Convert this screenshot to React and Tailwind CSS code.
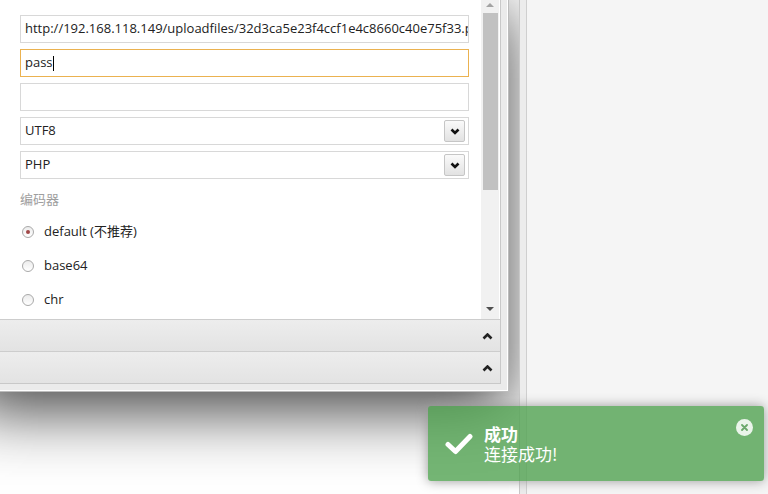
import React from 'react';

const ChevronDown = () => (
  <svg width="10" height="7" viewBox="0 0 10 7">
    <path d="M1.5 1.5 L5 5 L8.5 1.5" fill="none" stroke="#111" strokeWidth="2.6" />
  </svg>
);

const ChevronUp = () => (
  <svg width="11" height="7" viewBox="0 0 11 7">
    <path d="M1.5 5.5 L5.5 1.5 L9.5 5.5" fill="none" stroke="#222" strokeWidth="2.6" />
  </svg>
);

const Select = ({ value }) => (
  <div className="w-[449px] h-[28px] border border-[#d8d8d8] bg-white flex items-center justify-between pl-[4px] pr-[3px]">
    <span className="text-[13px] text-[#222]">{value}</span>
    <div className="w-[21px] h-[22px] rounded-[2px] border border-[#c6c6c6] bg-gradient-to-b from-[#fafafa] to-[#e2e2e2] flex items-center justify-center">
      <ChevronDown />
    </div>
  </div>
);

const Radio = ({ label, checked }) => (
  <div className="h-[34px] flex items-center">
    <div className="ml-[2px] w-[12px] h-[12px] rounded-full border border-[#a9a9a9] bg-gradient-to-b from-[#ececec] to-white flex items-center justify-center">
      {checked && <div className="w-[4px] h-[4px] rounded-full bg-[#a14848]" />}
    </div>
    <span className="ml-[10px] text-[13px] text-[#222]">{label}</span>
  </div>
);

const App = () => {
  return (
    <div className="relative w-[768px] h-[494px] overflow-hidden flex bg-white font-['Open_Sans','Noto_Sans_CJK_SC',sans-serif]">
      {/* left layout cell with the dialog */}
      <div className="relative w-[520px] h-full bg-white border-r border-[#c8c8c8] overflow-hidden">
        <div className="absolute left-[-30px] top-[-10px] w-[539px] border border-[#bcbcbc] bg-[#ebebeb] p-[7px] shadow-[inset_0_0_0_1px_#ffffff,0_20px_60px_rgba(0,0,0,0.72)]">
          <div className="border border-[#c8c8c8] bg-white flex flex-col">
            {/* form area */}
            <div className="h-[320px] flex">
              <div className="flex-1 overflow-hidden pl-[41px] pt-[16px]">
                <div className="flex flex-col gap-[6px]">
                  <div className="w-[449px] h-[28px] border border-[#d8d8d8] px-[4px] flex items-center overflow-hidden whitespace-nowrap text-[13px] text-[#222]">
                    http://192.168.118.149/uploadfiles/32d3ca5e23f4ccf1e4c8660c40e75f33.php
                  </div>
                  <div className="w-[449px] h-[28px] border border-[#ebb250] px-[4px] flex items-center text-[13px] text-[#222]">
                    pass<span className="w-px h-[15px] bg-black" />
                  </div>
                  <div className="w-[449px] h-[28px] border border-[#d8d8d8]" />
                  <Select value="UTF8" />
                  <Select value="PHP" />
                </div>
                <div className="mt-[12px] text-[13px] leading-[16px] text-[#9e9e9e]">编码器</div>
                <div className="mt-[8px] flex flex-col">
                  <Radio label="default (不推荐)" checked />
                  <Radio label="base64" />
                  <Radio label="chr" />
                </div>
              </div>
              {/* scrollbar */}
              <div className="w-[18px] mr-[1px] bg-[#f1f1f1] flex flex-col">
                <div className="h-[14px] flex items-center justify-center pb-[2px]">
                  <div className="w-0 h-0 border-x-[4px] border-x-transparent border-b-[4px] border-b-[#a3a3a3]" />
                </div>
                <div className="mx-[2px] w-[15px] h-[177px] bg-[#c1c1c1]" />
                <div className="flex-1" />
                <div className="h-[20px] flex items-center justify-center">
                  <div className="w-0 h-0 border-x-[4px] border-x-transparent border-t-[4px] border-t-[#505050]" />
                </div>
              </div>
            </div>
            {/* collapsed accordion cells */}
            <div className="h-[32px] border-t border-[#cdcdcd] bg-gradient-to-b from-[#ededed] to-[#e3e3e3] flex items-center justify-end pr-[7px] pt-[2px]">
              <ChevronUp />
            </div>
            <div className="h-[32px] border-t border-[#cdcdcd] bg-gradient-to-b from-[#ededed] to-[#e3e3e3] flex items-center justify-end pr-[7px] pt-[2px]">
              <ChevronUp />
            </div>
          </div>
        </div>
      </div>

      {/* splitter */}
      <div className="w-[6px] h-full bg-[#ececec]" />

      {/* right cell */}
      <div className="flex-1 h-full bg-[#f5f5f5] border-l border-[#cfcfcf]" />

      {/* toast */}
      <div className="absolute right-[4px] top-[406px] w-[336px] h-[75px] rounded-[3px] bg-[#51a351]/80 shadow-[0_0_12px_#999999] flex items-center pl-[17px]">
        <svg width="28" height="22" viewBox="0 0 28 22">
          <path d="M3 11.5 L10.5 18.5 L25 3.5" fill="none" stroke="#ffffff" strokeWidth="5" strokeLinecap="round" strokeLinejoin="round" />
        </svg>
        <div className="ml-[11px] text-white font-['Noto_Sans_CJK_SC',serif]">
          <div className="text-[17px] leading-[20px] font-bold">成功</div>
          <div className="text-[17px] leading-[20px]">连接成功!</div>
        </div>
        <div className="absolute right-[11px] top-[13px] w-[17px] h-[17px] rounded-full bg-white/85 flex items-center justify-center">
          <svg width="7" height="7" viewBox="0 0 7 7">
            <path d="M1 1 L6 6 M6 1 L1 6" stroke="#6aa86a" strokeWidth="1.8" strokeLinecap="round" />
          </svg>
        </div>
      </div>
    </div>
  );
};

export default App;
